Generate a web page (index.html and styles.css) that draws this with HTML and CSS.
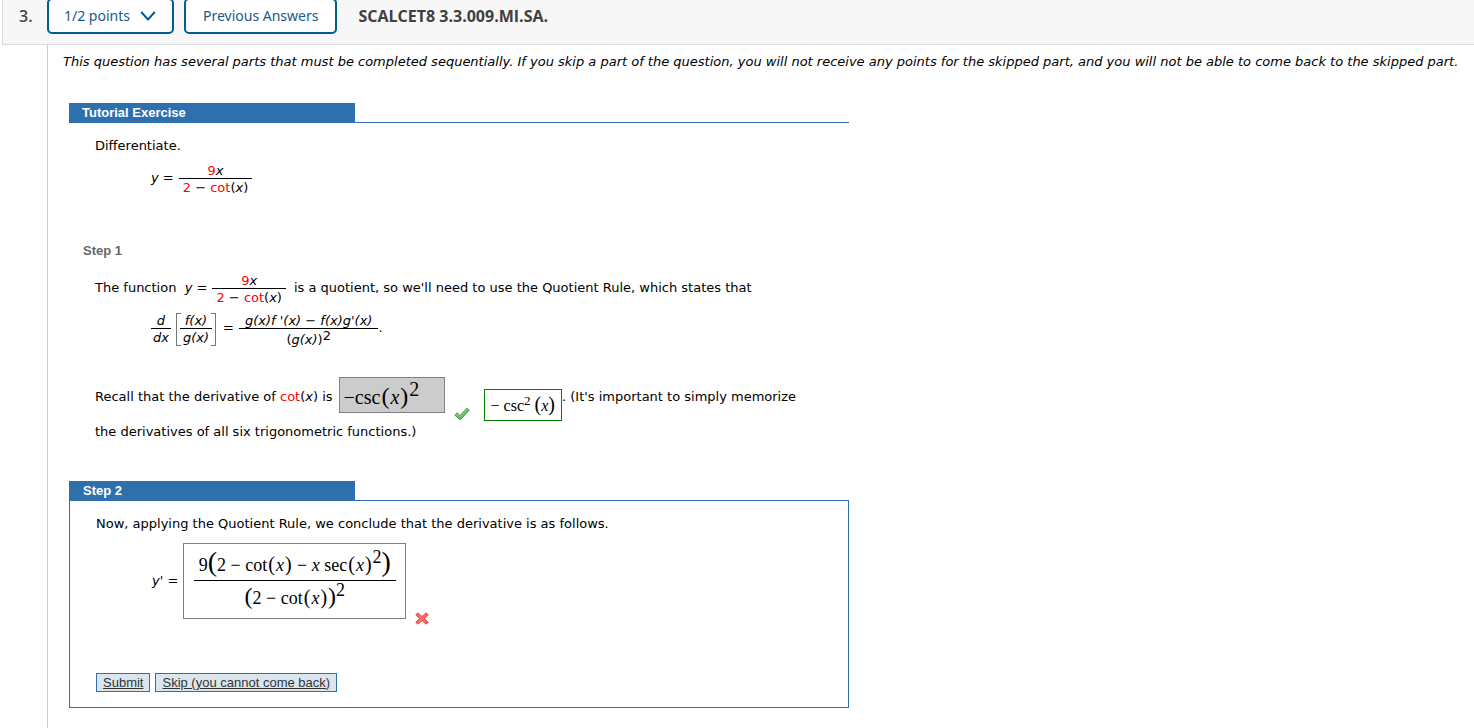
FILE: index.html
```html
<!DOCTYPE html>
<html lang="en">
<head>
<meta charset="utf-8">
<title>SCALCET8 3.3.009.MI.SA.</title>
<link rel="stylesheet" href="styles.css">
</head>
<body>
<header class="bar">
  <span class="number">3.</span>
  <button class="btn" type="button">1/2 points
    <svg class="chevron" width="16" height="10" viewBox="0 0 16 10" aria-hidden="true"><path d="M1.200 1 8 8.400l6.800-7.400" fill="none" stroke="#005e95" stroke-width="2"/></svg>
  </button>
  <button class="btn" type="button">Previous Answers</button>
  <h1 class="code">SCALCET8 3.3.009.MI.SA.</h1>
</header>
<main class="question">
  <p class="notice">This question has several parts that must be completed sequentially. If you skip a part of the question, you will not receive any points for the skipped part, and you will not be able to come back to the skipped part.</p>

  <section class="part exercise">
    <div class="rule"><h2 class="tab">Tutorial Exercise</h2></div>
    <div class="content">
      <p>Differentiate.</p>
      <div class="eq first-eq"><span class="label"><i>y</i> =</span>
        <span class="frac"><span class="num"><b>9</b><i>x</i></span><span class="den"><b>2</b> − <b>cot</b>(<i>x</i>)</span></span>
      </div>
    </div>
  </section>

  <section class="part step-one">
    <h2 class="plain">Step 1</h2>
    <div class="content">
      <div class="line"><span class="label">The function&nbsp; <i>y</i> =</span>
        <span class="frac"><span class="num"><b>9</b><i>x</i></span><span class="den"><b>2</b> − <b>cot</b>(<i>x</i>)</span></span>
        <span class="label after">is a quotient, so we'll need to use the Quotient Rule, which states that</span>
      </div>
      <div class="eq rule-eq">
        <span class="frac tight"><i class="num">d</i><i class="den">dx</i></span>
        <span class="bracket"><span class="frac tight"><i class="num">f(x)</i><i class="den">g(x)</i></span></span>
        <span class="label equals">=</span>
        <span class="frac wide"><i class="num">g(x)f '(x) − f(x)g'(x)</i><span class="den">(<i>g(x)</i>)<sup>2</sup></span></span>
        <span class="label stop">.</span>
      </div>
      <div class="recall">
        <span>Recall that the derivative of <b>cot</b>(<i>x</i>) is</span>
        <span class="answer">−csc<span class="p22">(</span><i>x</i><span class="p22">)</span><sup>2</sup></span>
        <svg class="check" width="16" height="14" viewBox="0 0 16 14" aria-label="correct"><path d="M.8 8.200 3.300 5.800 6 8.500 12.900 1.200 15.200 3.200 6.300 12.800Z" fill="#65bd65" stroke="#4a9c4d"/><path d="m2 8 1.300-1L6 9.700 13 2.400" fill="none" stroke="#93d58d"/></svg>
        <span class="key">− csc<sup>2</sup>&nbsp;<span class="p22">(</span><i>x</i><span class="p22">)</span></span>
        <span>. (It's important to simply memorize</span>
      </div>
      <p class="second">the derivatives of all six trigonometric functions.)</p>
    </div>
  </section>

  <section class="part step-two">
    <h2 class="tab">Step 2</h2>
    <div class="panel">
      <p>Now, applying the Quotient Rule, we conclude that the derivative is as follows.</p>
      <div class="eq response"><span class="lhs"><i>y</i>' =</span>
        <span class="entry"><span class="frac">
          <span class="top">9<span class="p27">(</span>2 − cot<span class="p22">(</span><i>x</i><span class="p22">)</span> − <i>x</i> sec<span class="p22">(</span><i>x</i><span class="p22">)</span><sup>2</sup><span class="p27">)</span></span>
          <span class="bottom"><span class="p24">(</span>2 − cot<span class="p22">(</span><i>x</i><span class="p22">)</span><span class="p24">)</span><sup>2</sup></span>
        </span></span>
        <svg class="cross" width="14" height="13" viewBox="0 0 14 13" aria-label="incorrect"><path d="M2.800.8 7 4.500 11.200.8 13.200 2.800 9.400 6.500 13.200 10.200 11.200 12.200 7 8.600 2.800 12.200.8 10.200 4.600 6.500.8 2.800Z" fill="#ff5a5a" stroke="#e84a50"/><path d="m3 3 8 7M11 3l-8 7" stroke="#ff8a86"/></svg>
      </div>
      <div class="actions"><button type="button">Submit</button><button type="button">Skip (you cannot come back)</button></div>
    </div>
  </section>
</main>
</body>
</html>
```
FILE: styles.css
```css
* { box-sizing: border-box; }
html { overflow: hidden; }
body { margin: -13px 0 0; background: #fff; color: #000; font: 13px/16px "DejaVu Sans", Verdana, sans-serif; }
p, h1, h2 { margin: 0; }
b { color: #f00; font-weight: normal; }
sup { line-height: 0; vertical-align: 4px; font-size: 13px; }

.bar { display: flex; align-items: center; margin-left: 2px; padding: 10px 16px; background: #f7f7f7; border: 1px solid #dcdcdc; border-right: 0; font-family: "Open Sans", "Noto Sans", sans-serif; }
.number { width: 28px; font-size: 16px; line-height: 20px; font-weight: 600; color: #444; }
.btn { display: flex; align-items: center; gap: 10px; height: 36px; margin-right: 10px; padding: 0 15px; border: 2px solid #005e95; border-radius: 5px; background: #fff; color: #1b5a8c; font: 14px/20px "Noto Sans", sans-serif; white-space: nowrap; }
.btn + .btn { padding: 0 17px; }
.btn:first-of-type { padding-right: 16px; }
.code { margin-left: 11px; font-size: 16px; line-height: 20px; font-weight: 700; color: #404040; }

.question { margin-left: 47px; min-height: 683px; padding: 9px 0 20px 15px; border-left: 1px solid #ccc; }
.notice { font-style: italic; white-space: nowrap; }
.part { width: 780px; max-width: 100%; margin-left: 6px; }
.exercise { margin-top: 33px; }
.rule { border-bottom: 1px solid #2e6fad; }
.tab { width: 286px; padding: 0 13px; background: #2e6fad; color: #fff; font: bold 13px/19px "Liberation Sans", Arial, sans-serif; }
.plain { padding-left: 14px; color: #666; font: bold 13px/19px "Liberation Sans", Arial, sans-serif; }
.content { padding: 15px 0 0 26px; }
.eq { display: flex; align-items: flex-start; padding-left: 56px; }
.label { line-height: 30px; }
.frac { display: inline-flex; flex-direction: column; align-items: center; margin-left: 5px; white-space: nowrap; }
.num { align-self: stretch; padding: 0 3px; border-bottom: 1px solid #000; text-align: center; line-height: 15px; }
.den { padding: 0 4px; line-height: 17px; }
.first-eq { margin-top: 9px; }
.step-one { margin-top: 45px; }
.step-one .content { padding-top: 13px; }
.line, .recall { display: flex; align-items: flex-start; white-space: nowrap; }
.after { margin-left: 8px; }
.rule-eq { height: 33px; margin-top: 7px; }
.tight { margin-left: 0; }
.tight .num, .tight .den { padding: 0 2px; }
.bracket { position: relative; margin-left: 5px; padding: 0 4px; }
.bracket .num, .bracket .den { padding: 0 3px; }
.bracket::before, .bracket::after { content: ""; position: absolute; top: 0; bottom: 0; width: 4px; border: 1px solid #777; }
.bracket::before { left: 0; border-right: 0; }
.bracket::after { right: 0; border-left: 0; }
.equals { margin: 0 0 0 7px; }
.wide .num { padding: 0 6px; }
.wide .den { line-height: 22px; }
.recall { height: 36px; margin-top: 31px; line-height: 40px; }
.answer, .key, .entry { font-family: "Liberation Serif", "Times New Roman", serif; white-space: nowrap; }
.answer sup, .entry sup { vertical-align: 8px; }
.key sup { vertical-align: 6px; }
.p22, .p24, .p27 { line-height: 0; font-weight: normal; }
.p22 { font-size: 20px; margin: 0 1px; }
.p24 { font-size: 24px; }
.p27 { font-size: 28px; }
.answer { width: 106px; height: 36px; margin: 0 9px 0 6px; padding: 0 4px; border: 1px solid #808080; background: #ccc; font-size: 20px; line-height: 38px; }
.answer .p22 { font-size: 24px; }
.answer sup { font-size: 20px; }
.check { align-self: flex-end; margin: 0 14px -8px 0; }
.key { height: 32px; margin-top: 12px; padding: 0 6px; border: 1px solid #008000; font-size: 16px; line-height: 32px; }
.key .p22 { margin: 0; }
.second { margin-top: 11px; }
.step-two { margin-top: 41px; }
.step-two .tab { padding-left: 14px; }
.panel { padding: 15px 26px; border: 1px solid #2e6fad; }
.response { align-items: center; margin-top: 11px; }
.entry { display: inline-flex; justify-content: center; min-width: 223px; height: 76px; margin-left: 5px; padding: 6px 8px; border: 1px solid #808080; font-size: 18px; }
.entry .frac { margin: 0; }
.entry sup { font-size: 18px; }
.top { padding: 0 5px; border-bottom: 1px solid #000; line-height: 30px; }
.bottom { line-height: 34px; }
.cross { align-self: flex-end; margin: 0 0 -6px 9px; }
.actions { display: flex; gap: 5px; margin-top: 54px; }
.actions button { height: 19px; padding: 0 6px; border: 1px solid #2e6fad; background: #dae6ef; color: #333; font: 13px/16px "Liberation Sans", Arial, sans-serif; text-decoration: underline; white-space: nowrap; }
```
